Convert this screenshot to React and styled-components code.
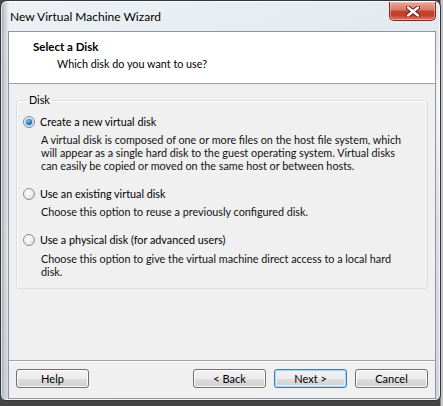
import React from 'react';
import styled, { createGlobalStyle, css } from 'styled-components';

const GlobalStyle = createGlobalStyle`
  html, body {
    margin: 0;
    padding: 0;
  }
  body {
    background: linear-gradient(90deg, #454545 0, #454545 440px, #c9c9c9 441px);
    width: 443px;
    height: 406px;
    overflow: hidden;
    font-family: Lato, "Open Sans", sans-serif;
    font-size: 10.8px;
    color: #000;
  }
`;

const Window = styled.div`
  box-sizing: border-box;
  width: 441px;
  height: 401px;
  border: 1px solid #33373c;
  border-radius: 7px 7px 6px 6px;
  background:
    linear-gradient(90deg, #9aa1a8 0, #c3c9cf 3px, transparent 8px),
    linear-gradient(160deg, #eef2f6 0%, #e2e8ee 35%, #f3f5f8 45%, #d8dee5 70%, #cfd5dc 100%);
  box-shadow: inset 0 0 0 1px rgba(255, 255, 255, 0.7);
  display: flex;
  flex-direction: column;
  overflow: hidden;
`;

const TitleBar = styled.div`
  height: 30px;
  flex: none;
  display: flex;
  justify-content: space-between;
  align-items: flex-start;
`;

const Title = styled.div`
  padding: 8px 0 0 9px;
  font-size: 12px;
  line-height: 15px;
  color: #000;
`;

const CloseButton = styled.div`
  box-sizing: border-box;
  width: 47px;
  height: 19px;
  margin: 1px 4px 0 0;
  border: 1px solid #7d2a20;
  border-top: none;
  border-radius: 0 0 5px 5px;
  background: linear-gradient(#e9a899 0%, #d77a68 45%, #c2402c 50%, #c4402d 75%, #dc7d68 100%);
  box-shadow: inset 0 0 0 1px rgba(255, 220, 210, 0.45);
  display: flex;
  align-items: center;
  justify-content: center;
`;

const Client = styled.div`
  flex: 1;
  margin: 0 4px 1px 7px;
  border: 1px solid #8a96a3;
  background: #f0f0f0;
  display: flex;
  flex-direction: column;
`;

const Header = styled.div`
  height: 52px;
  flex: none;
  box-sizing: border-box;
  background: #fff;
  border-bottom: 1px solid #a0a0a0;
  padding: 8px 0 0 24px;
`;

const HeaderTitle = styled.div`
  font-weight: 700;
  font-size: 11.5px;
  line-height: 14px;
`;

const HeaderSub = styled.div`
  padding: 3px 0 0 24px;
  line-height: 14px;
`;

const Body = styled.div`
  flex: 1;
  padding: 9px 7px 0;
`;

const GroupBox = styled.fieldset`
  margin: 0;
  padding: 8px 10px 10px 6px;
  border: 1px solid #d5dfe5;
  border-radius: 3px;
  box-shadow: inset 1px 1px 0 #fff;
`;

const Legend = styled.legend`
  padding: 0 2px;
  margin-left: 4px;
  line-height: 14px;
`;

const Option = styled.label`
  display: flex;
  align-items: center;
  gap: 5px;
  height: 13px;
  line-height: 13px;
  margin-bottom: ${(p) => p.$gap}px;
`;

const Radio = styled.span`
  box-sizing: border-box;
  width: 12px;
  height: 12px;
  flex: none;
  border-radius: 50%;
  border: 1px solid #8a9097;
  background: radial-gradient(circle at 35% 35%, #ffffff 0%, #e9ebee 55%, #c9cdd2 100%);
  display: flex;
  align-items: center;
  justify-content: center;
  ${(p) =>
    p.$checked &&
    css`
      border-color: #6f8cab;
      &::after {
        content: '';
        width: 6px;
        height: 6px;
        border-radius: 50%;
        background: radial-gradient(circle at 40% 35%, #7fc3f0 0%, #2a6fb0 55%, #123f73 100%);
        box-shadow: 0 0 0 1px #b7d3ec;
      }
    `}
`;

const Description = styled.div`
  padding-left: 18px;
  line-height: 13px;
  color: #111;
  white-space: nowrap;
  margin-bottom: ${(p) => p.$gap}px;
`;

const Footer = styled.div`
  flex: none;
  border-top: 1px solid #a0a0a0;
  box-shadow: inset 0 1px 0 #fff;
  padding: 8px 7px 10px;
  display: flex;
  gap: 8px;
`;

const Spacer = styled.div`
  flex: 1;
`;

const Button = styled.button`
  box-sizing: border-box;
  width: 73px;
  height: 19px;
  padding: 0;
  font-family: inherit;
  font-size: 11px;
  color: #000;
  border: 1px solid ${(p) => (p.$default ? '#3c7fb1' : '#707070')};
  border-radius: 3px;
  background: linear-gradient(#f2f2f2 0%, #ebebeb 50%, #dddddd 51%, #cfcfcf 100%);
  box-shadow: ${(p) =>
    p.$default ? 'inset 0 0 0 1px #a6d6f4, inset 0 0 0 2px #e3f1fb' : 'inset 0 0 0 1px #fcfcfc'};
`;

const CloseGlyph = () => (
  <svg width="14" height="11" viewBox="0 0 14 11">
    <path
      d="M2 1.5 L12 9.5 M12 1.5 L2 9.5"
      stroke="#5a1a12"
      strokeWidth="4.2"
      strokeLinecap="round"
    />
    <path d="M2 1.5 L12 9.5 M12 1.5 L2 9.5" stroke="#fff" strokeWidth="2.4" strokeLinecap="round" />
  </svg>
);

const App = () => {
  return (
    <>
      <GlobalStyle />
      <Window>
        <TitleBar>
          <Title>New Virtual Machine Wizard</Title>
          <CloseButton>
            <CloseGlyph />
          </CloseButton>
        </TitleBar>
        <Client>
          <Header>
            <HeaderTitle>Select a Disk</HeaderTitle>
            <HeaderSub>Which disk do you want to use?</HeaderSub>
          </Header>
          <Body>
            <GroupBox>
              <Legend>Disk</Legend>
              <Option $gap={5}>
                <Radio $checked />
                Create a new virtual disk
              </Option>
              <Description $gap={15}>
                A virtual disk is composed of one or more files on the host file system, which
                <br />
                will appear as a single hard disk to the guest operating system. Virtual disks
                <br />
                can easily be copied or moved on the same host or between hosts.
              </Description>
              <Option $gap={5}>
                <Radio />
                Use an existing virtual disk
              </Option>
              <Description $gap={15}>Choose this option to reuse a previously configured disk.</Description>
              <Option $gap={6}>
                <Radio />
                Use a physical disk (for advanced users)
              </Option>
              <Description $gap={0}>
                Choose this option to give the virtual machine direct access to a local hard
                <br />
                disk.
              </Description>
            </GroupBox>
          </Body>
          <Footer>
            <Button>Help</Button>
            <Spacer />
            <Button>&lt; Back</Button>
            <Button $default>Next &gt;</Button>
            <Button>Cancel</Button>
          </Footer>
        </Client>
      </Window>
    </>
  );
};

export default App;
